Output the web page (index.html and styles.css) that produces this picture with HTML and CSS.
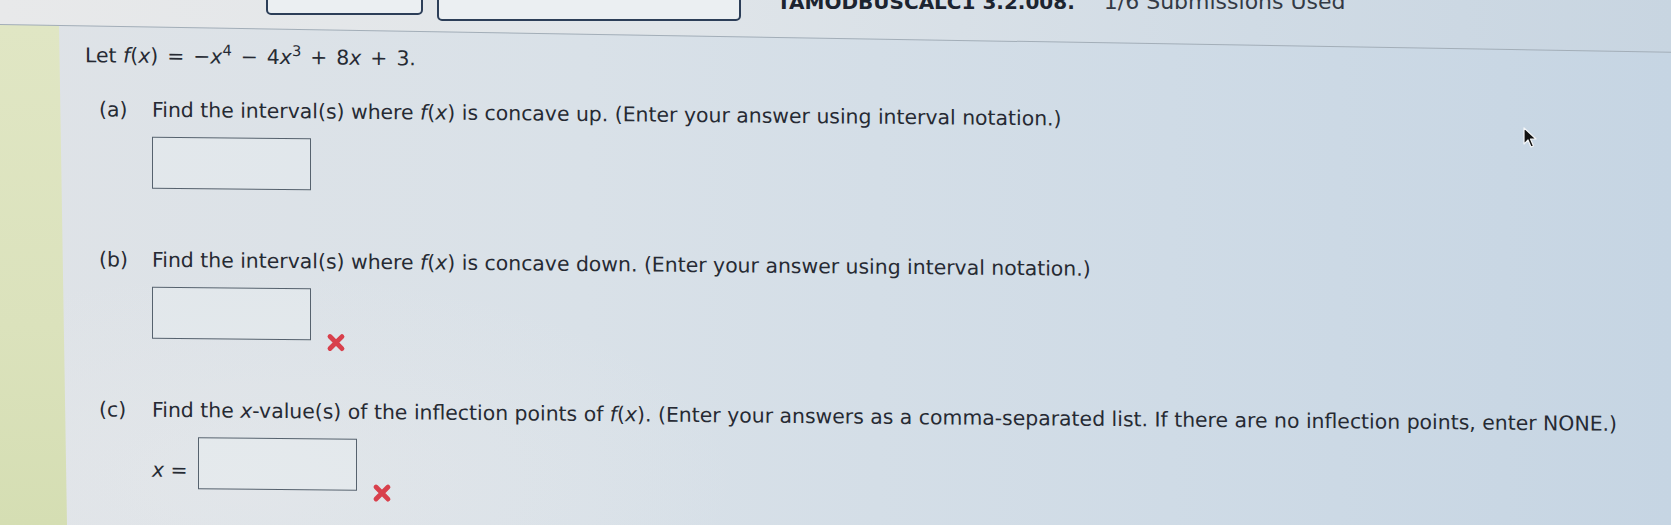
FILE: index.html
```html
<!DOCTYPE html>
<html lang="en">
<head>
<meta charset="utf-8">
<title>Concavity question</title>
<link rel="stylesheet" href="styles.css">
</head>
<body>
<div class="page">
  <div class="topbar">
    <span class="btn btn-one"></span>
    <span class="btn btn-two"></span>
    <span class="pid">TAMODBUSCALC1 3.2.008.</span>
    <span class="subs">1/6 Submissions Used</span>
  </div>
  <div class="main">
    <div class="gutter"></div>
    <div class="question">
      <p class="stem">Let <span class="math"><i>f</i>(<i>x</i>) = &minus;<i>x</i><sup>4</sup> &minus; 4<i>x</i><sup>3</sup> + 8<i>x</i> + 3.</span></p>
      <ol class="parts">
        <li class="part">
          <span class="label">(a)</span>
          <div class="body">
            <p class="prompt">Find the interval(s) where <i>f</i>(<i>x</i>) is concave up. (Enter your answer using interval notation.)</p>
            <div class="answer"><span class="field"></span></div>
          </div>
        </li>
        <li class="part">
          <span class="label">(b)</span>
          <div class="body">
            <p class="prompt">Find the interval(s) where <i>f</i>(<i>x</i>) is concave down. (Enter your answer using interval notation.)</p>
            <div class="answer">
              <span class="field"></span>
              <svg class="wrong" viewBox="0 0 20 20" width="20" height="20" aria-label="incorrect"><path d="M4 4 L16 16 M16 4 L4 16" /></svg>
            </div>
          </div>
        </li>
        <li class="part">
          <span class="label">(c)</span>
          <div class="body">
            <p class="prompt">Find the <i>x</i>-value(s) of the inflection points of <i>f</i>(<i>x</i>). (Enter your answers as a comma-separated list. If there are no inflection points, enter NONE.)</p>
            <div class="answer">
              <span class="eq"><i>x</i> =</span>
              <span class="field"></span>
              <svg class="wrong" viewBox="0 0 20 20" width="20" height="20" aria-label="incorrect"><path d="M4 4 L16 16 M16 4 L4 16" /></svg>
            </div>
          </div>
        </li>
      </ol>
    </div>
  </div>
  <svg class="cursor" viewBox="0 0 14 22" width="14" height="22"><path d="M1 1 L1 17 L5 13 L8 20 L10.5 19 L7.5 12 L13 12 Z" /></svg>
</div>
</body>
</html>
```

FILE: styles.css
```css
html, body {
  margin: 0;
  padding: 0;
}

body {
  width: 1671px;
  height: 525px;
  overflow: hidden;
  font-family: "DejaVu Sans", Verdana, sans-serif;
  color: #262a33;
  background: #d6dfe7;
}

.page {
  position: relative;
  width: 1671px;
  height: 525px;
  overflow: hidden;
  background:
    radial-gradient(ellipse 700px 300px at 250px 480px, rgba(232, 234, 236, 0.45), rgba(232, 234, 236, 0) 70%),
    linear-gradient(90deg, #dfe3e7 0%, #d9e1e8 35%, #cfdbe6 70%, #c6d5e3 100%);
}

/* top strip with the cut-off header buttons */
.topbar {
  position: relative;
  z-index: 2;
  height: 25px;
  display: flex;
  align-items: flex-start;
}

.topbar::before {
  content: "";
  position: absolute;
  z-index: -1;
  left: 0;
  top: -80px;
  width: 1671px;
  height: 105px;
  box-sizing: border-box;
  border-bottom: 1.5px solid #a3aeb8;
  background: linear-gradient(90deg, #e8e9ea 0%, #e0e5e9 40%, #d0dbe5 75%, #c8d5e1 100%);
  transform: skewY(0.95deg);
  transform-origin: 0 100%;
}

.btn {
  display: block;
  box-sizing: border-box;
  border: 2px solid #2c3e58;
  border-radius: 5px;
  background: #ebeff2;
  flex: none;
}

.btn-one {
  margin-left: 266px;
  width: 157px;
  height: 40px;
  margin-top: -25px;
}

.btn-two {
  margin-left: 14px;
  width: 304px;
  height: 46px;
  margin-top: -25px;
}

.pid {
  margin-left: 36px;
  margin-top: -8px;
  font-size: 20px;
  line-height: 20px;
  font-weight: bold;
  color: #1c2430;
  white-space: nowrap;
}

.subs {
  margin-left: 29px;
  margin-top: -9px;
  font-size: 22px;
  line-height: 22px;
  color: #333a45;
  white-space: nowrap;
}

.main {
  display: flex;
  height: 500px;
}

.gutter {
  width: 67px;
  flex: none;
  background: linear-gradient(180deg, #e0e6c4 0%, #dbe2bc 60%, #d5deb3 100%);
  clip-path: polygon(0 0, 59px 0, 67px 100%, 0 100%);
}

.question {
  flex: 1;
  padding-left: 18px;
  padding-top: 18px;
  font-size: 20.4px;
  line-height: 24px;
  transform: skewY(0.55deg);
  transform-origin: 0 0;
}

.stem {
  margin: 0;
  white-space: nowrap;
}

.math {
  word-spacing: 2.5px;
}

sup {
  font-size: 0.72em;
  line-height: 0;
  vertical-align: 0.55em;
}

.parts {
  list-style: none;
  margin: 30px 0 0 0;
  padding: 0 0 0 14px;
}

.part {
  display: flex;
  margin-bottom: 59px;
}

.label {
  width: 53px;
  flex: none;
}

.body {
  flex: 1;
}

.prompt {
  margin: 0;
  white-space: nowrap;
}

.answer {
  display: flex;
  align-items: center;
  margin-top: 15px;
}

.field {
  display: block;
  box-sizing: border-box;
  width: 159px;
  height: 52px;
  border: 1.5px solid #56626e;
  background: rgba(236, 240, 244, 0.35);
}

.eq {
  margin-right: 10px;
  margin-top: 14px;
}

.wrong {
  align-self: flex-end;
  margin-left: 15px;
  margin-bottom: -12px;
}

.wrong path {
  fill: none;
  stroke: #d8404c;
  stroke-width: 4.8;
  stroke-linecap: round;
}

.cursor {
  position: absolute;
  z-index: 3;
  left: 1523px;
  top: 127px;
}

.cursor path {
  fill: #111;
  stroke: #f4f6f8;
  stroke-width: 1.2;
  stroke-linejoin: round;
}
```
